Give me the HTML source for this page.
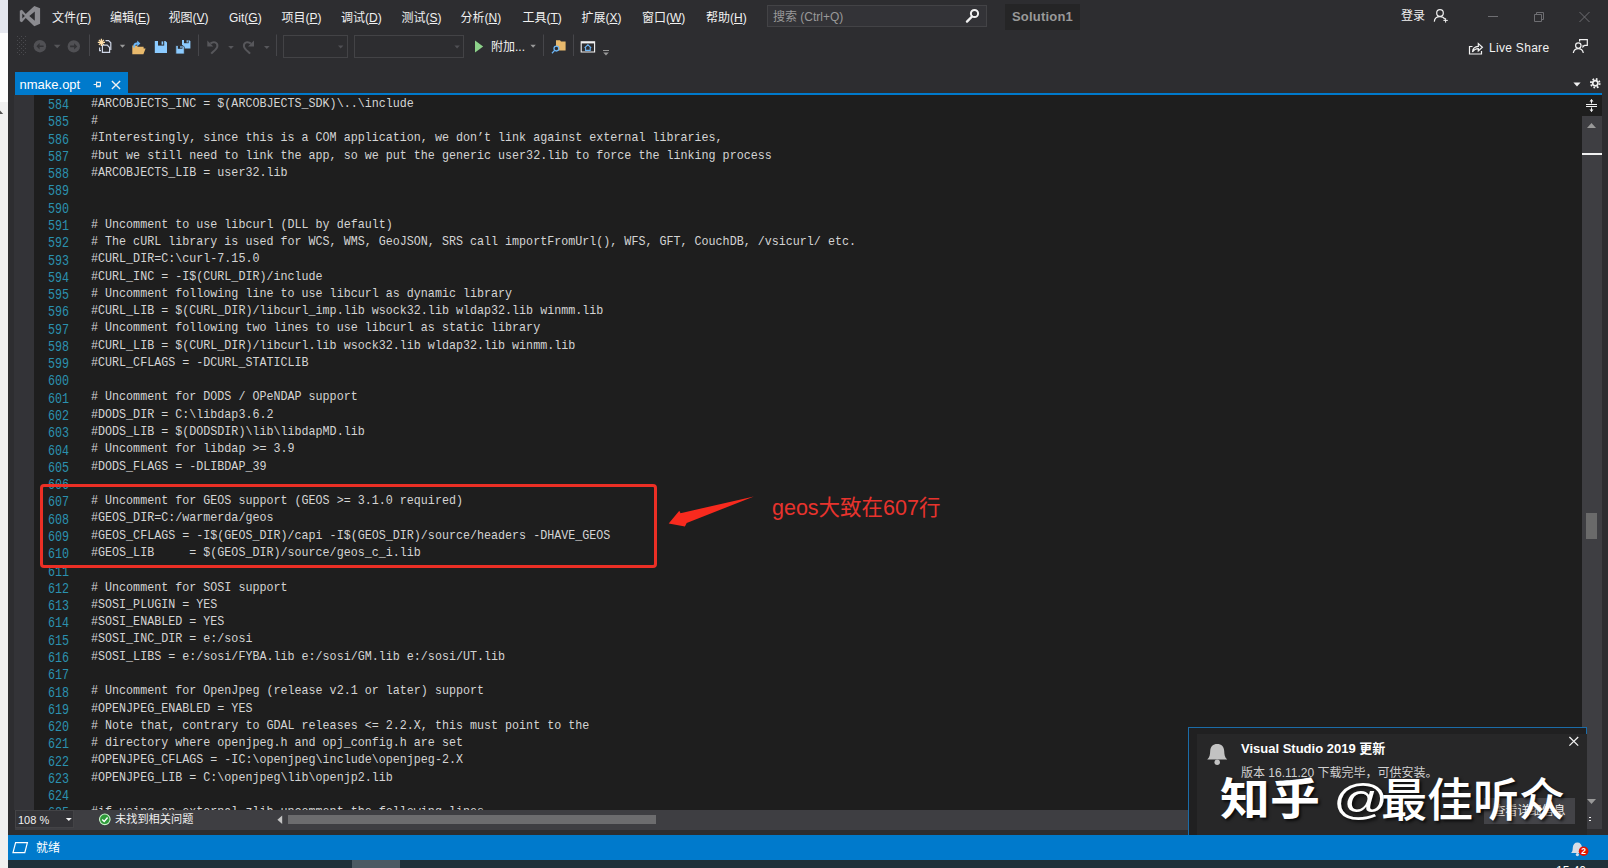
<!DOCTYPE html>
<html lang="zh-CN">
<head>
<meta charset="utf-8">
<title>nmake.opt - Visual Studio</title>
<style>
*{box-sizing:border-box;margin:0;padding:0}
html,body{width:1608px;height:868px;overflow:hidden;background:#2d2d30}
body{position:relative;font-family:"Liberation Sans","Noto Sans CJK SC",sans-serif;font-size:12px;color:#f1f1f1}
.abs{position:absolute}
/* left foreign-window strip */
#ls1{left:0;top:0;width:8px;height:33px;background:#e5e7ef}
#ls2{left:0;top:33px;width:8px;height:69px;background:#fdfdfd}
#ls3{left:0;top:102px;width:8px;height:766px;background:#f0f0f0}
/* menu */
.menu{position:absolute;top:9.5px;height:17px;line-height:17px;font-size:12px;color:#f1f1f1;white-space:nowrap}
.menu u{text-decoration:underline;text-underline-offset:1px}
/* editor */
#editor{left:14px;top:95px;width:1568px;height:715px;background:#1e1e1e;overflow:hidden}
#margin{left:0;top:0;width:20px;height:715px;background:#333337}
#code{left:0;top:0;width:1567px;height:715px;font-family:"Liberation Mono","Noto Sans CJK SC",monospace;font-size:14px}
.ln{position:absolute;left:0;height:18px;line-height:18px;white-space:pre}
.no{position:absolute;left:34px;top:0.5px;color:#2b91af;transform-origin:0 50%;transform:scaleX(0.8357)}
.tx{position:absolute;left:76.7px;top:-0.8px;font-size:13.6px;color:#d4d4d4;transform-origin:0 50%;transform:scaleX(0.8603)}

#search{left:767px;top:5px;width:220px;height:22px;background:#333337;border:1px solid #434346;color:#999;font-size:12px;line-height:20px}
#search span{position:absolute;left:5px;top:1px}
#sol{left:1005px;top:4px;width:75px;height:26px;background:#252526;color:#999;font-weight:bold;font-size:13px;letter-spacing:.2px;line-height:26px;text-align:center}
#liveshare{left:1489px;top:40px;height:17px;line-height:17px;font-size:12px;letter-spacing:.3px;color:#f1f1f1;white-space:nowrap}
.combo{top:35px;height:23px;background:#2d2d30;border:1px solid #434346}
#attach{left:491px;top:39px;height:17px;line-height:17px;font-size:12px;color:#f1f1f1;white-space:nowrap}
#tab{left:15px;top:72px;width:113px;height:21px;background:#007acc;color:#fff;font-size:13px;line-height:21px}
#tab span{position:absolute;left:4.5px;top:1.5px}
#tabline{left:15px;top:93px;width:1587px;height:2px;background:#007acc}

#redbox{left:40px;top:484px;width:617px;height:84px;border:3px solid #ec2f25;border-radius:4px}
#caption{left:772px;top:493px;height:30px;line-height:30px;font-size:21.5px;color:#e8332d;white-space:nowrap}
#vscroll{left:1582px;top:95px;width:20px;height:734px;background:#3e3e42}
#vsplit{left:0;top:0;width:20px;height:21px;background:#1e1e1e}
#vmark{left:0;top:58px;width:20px;height:2px;background:#f1f1f1}
#vthumb{left:4px;top:418px;width:11px;height:26px;background:#6a6a6a}
#estrip{left:15px;top:810px;width:1567px;height:20px;background:#3e3e42}
#zoom{left:0;top:0;width:59px;height:18px;background:#333337;border:1px solid #434346;color:#f1f1f1;font-size:11px;line-height:16px}
#zoom span{position:absolute;left:2px;top:0.5px}
#noissue{left:100px;top:0;height:18px;line-height:18px;font-size:11.2px;color:#f1f1f1;white-space:nowrap}
#hthumb{left:273px;top:5.4px;width:368px;height:8.6px;background:#6c6c6e}
#status{left:8px;top:835px;width:1600px;height:25px;background:#007acc;color:#fff;font-size:12px;line-height:25px}
#status span{position:absolute;left:28px;top:1px}
#taskbar{left:8px;top:860px;width:1600px;height:8px;background:#1f303a;overflow:hidden}
#tbact{left:344px;top:0;width:48px;height:8px;background:#4b5a63}
#clock{left:1548px;top:4px;font-size:12px;line-height:14px;color:#fff}
#popup{left:1188px;top:727px;width:399px;height:108px;background:#202021;border:1px solid #1b6ca8;border-bottom:none}
#pin{left:8px;top:6px;width:390px;height:101px;background:#272728}
#ptitle{left:52px;top:11.5px;height:17px;line-height:17px;font-size:13px;font-weight:bold;color:#fff;white-space:nowrap}
#pbody{left:52px;top:37px;height:17px;line-height:17px;font-size:12px;color:#d0d0d0;white-space:nowrap}
#pbtn{left:295px;top:70px;width:91px;height:26px;background:#434347;color:#f1f1f1;font-size:12px;line-height:26px;text-align:center;white-space:nowrap}
#wm1,#wm2{height:70px;line-height:70px;color:#fff;white-space:nowrap;font-family:"Liberation Sans","Noto Sans CJK SC",sans-serif;text-shadow:2px 2px 3px rgba(0,0,0,.75)}
#wm1{left:1220px;top:764.6px;font-size:50px;font-weight:700;transform-origin:50% 50%;transform:scaleY(0.89)}
#wm2{left:1381px;top:765px;font-size:46px;font-weight:500}
#wm3{left:1333px;top:763.5px;font-size:43px;height:70px;line-height:70px;color:#fff;text-shadow:2px 2px 3px rgba(0,0,0,.75);transform-origin:0 50%;transform:scaleX(1.27)}
</style>
</head>
<body>
<div class="abs" id="ls1"></div><div class="abs" id="ls2"></div><div class="abs" id="ls3"></div>

<!-- ===== title / menu bar ===== -->
<div class="menu" style="left:52px">文件(<u>F</u>)</div>
<div class="menu" style="left:110px">编辑(<u>E</u>)</div>
<div class="menu" style="left:168.5px">视图(<u>V</u>)</div>
<div class="menu" style="left:229px">Git(<u>G</u>)</div>
<div class="menu" style="left:281.5px">项目(<u>P</u>)</div>
<div class="menu" style="left:341px">调试(<u>D</u>)</div>
<div class="menu" style="left:401.5px">测试(<u>S</u>)</div>
<div class="menu" style="left:460.5px">分析(<u>N</u>)</div>
<div class="menu" style="left:522.5px">工具(<u>T</u>)</div>
<div class="menu" style="left:581.5px">扩展(<u>X</u>)</div>
<div class="menu" style="left:642px">窗口(<u>W</u>)</div>
<div class="menu" style="left:706px">帮助(<u>H</u>)</div>

<div class="abs" id="search"><span>搜索 (Ctrl+Q)</span></div>
<div class="abs" id="sol">Solution1</div>
<div class="menu" style="left:1401px;top:8.3px">登录</div>
<div class="abs" id="liveshare">Live Share</div>

<!-- toolbar combos -->
<div class="abs combo" style="left:283px;width:65px"></div>
<div class="abs combo" style="left:354px;width:110px"></div>
<div class="abs" id="attach">附加...</div>

<!-- document tab -->
<div class="abs" id="tab"><span>nmake.opt</span></div>
<div class="abs" id="tabline"></div>

<svg class="abs" style="left:0;top:0" width="1608" height="100" viewBox="0 0 1608 100">
 <!-- VS logo -->
 <path fill="#8b8b90" fill-rule="evenodd" d="M34.3 5.9 L40.1 8.3 V23.8 L34.3 26.2 L25.7 18 L21.9 22.3 L19.8 21.3 V10.8 L21.9 9.8 L25.7 14.1 Z M34.8 11.4 V20.7 L29.3 16.05 Z M22.3 13.5 L24.9 16.05 L22.3 18.6 Z"/>
 <!-- search magnifier -->
 <g fill="none" stroke="#f1f1f1" stroke-width="2"><circle cx="974.5" cy="13.5" r="3.6"/><path d="M972 16.5 L967 21.6" stroke-width="2.4" stroke-linecap="round"/></g>
 <!-- user icon -->
 <g fill="none" stroke="#f1f1f1" stroke-width="1.2"><circle cx="1440" cy="13" r="3.3"/><path d="M1434.3 21.6 C1434.6 17.8 1437 16.6 1440 16.6 C1442.4 16.6 1444 17.6 1444.9 19.3"/><path d="M1445.6 18.2 V22.6 M1443.4 20.4 H1447.8" stroke-width="1"/></g>
 <!-- window buttons -->
 <g fill="none" stroke="#6e6e72" stroke-width="1"><path d="M1488 16.5 H1498"/><path d="M1534.5 14.5 H1541.5 V21.5 H1534.5 Z M1536.5 14.5 V12.5 H1543.5 V19.5 H1541.5"/><path d="M1579.5 12 L1589.5 22 M1589.5 12 L1579.5 22"/></g>
 <!-- live share icon -->
 <g fill="none" stroke="#f1f1f1" stroke-width="1.2"><path d="M1472.5 46.5 H1469.5 V54 H1481.5 V51"/><path d="M1472.5 52 C1472.8 48 1475 46.4 1478.3 46.3 V43.6 L1482.4 47.3 L1478.3 51 V48.6 C1475.6 48.6 1474 49.6 1472.5 52 Z"/></g>
 <!-- feedback icon -->
 <g fill="none" stroke="#f1f1f1" stroke-width="1.2"><circle cx="1578.3" cy="45.6" r="2.7"/><path d="M1573.3 53 C1573.8 49.9 1575.8 48.7 1578.3 48.7 C1580.8 48.7 1582.8 49.9 1583.3 53"/><path d="M1579.6 41.6 V39.6 H1587.3 V45.3 H1584.6 L1583 46.8 V45.3"/></g>
 <!-- tab-well dropdown + gear -->
 <path fill="#f1f1f1" d="M1573.4 82.6 H1580.6 L1577 86.4 Z"/>
 <g fill="none" stroke="#f1f1f1"><circle cx="1595.3" cy="83.3" r="2.6" stroke-width="1.7"/><circle cx="1595.3" cy="83.3" r="4.4" stroke-width="1.8" stroke-dasharray="1.73 1.73"/></g>

 <!-- toolbar grip -->
 <g fill="#4a4a4e">
  <rect x="17" y="36" width="1" height="1"/><rect x="21" y="36" width="1" height="1"/><rect x="25" y="36" width="1" height="1"/>
  <rect x="19" y="38" width="1" height="1"/><rect x="23" y="38" width="1" height="1"/>
  <rect x="17" y="40" width="1" height="1"/><rect x="21" y="40" width="1" height="1"/><rect x="25" y="40" width="1" height="1"/>
  <rect x="19" y="42" width="1" height="1"/><rect x="23" y="42" width="1" height="1"/>
  <rect x="17" y="44" width="1" height="1"/><rect x="21" y="44" width="1" height="1"/><rect x="25" y="44" width="1" height="1"/>
  <rect x="19" y="46" width="1" height="1"/><rect x="23" y="46" width="1" height="1"/>
  <rect x="17" y="48" width="1" height="1"/><rect x="21" y="48" width="1" height="1"/><rect x="25" y="48" width="1" height="1"/>
  <rect x="19" y="50" width="1" height="1"/><rect x="23" y="50" width="1" height="1"/>
  <rect x="17" y="52" width="1" height="1"/><rect x="21" y="52" width="1" height="1"/><rect x="25" y="52" width="1" height="1"/>
  <rect x="19" y="54" width="1" height="1"/><rect x="23" y="54" width="1" height="1"/>
 </g>
 <!-- back / forward -->
 <circle cx="39.9" cy="46.2" r="6.2" fill="#505054"/>
 <path d="M36.4 46.2 L39.6 43 V45.4 H43.6 V47 H39.6 V49.4 Z" fill="#333336"/>
 <path d="M53.8 44.8 H60.6 L57.2 48.2 Z" fill="#555558"/>
 <circle cx="73.8" cy="46.4" r="6.2" fill="#505054"/>
 <path d="M77.3 46.4 L74.1 43.2 V45.6 H70.1 V47.2 H74.1 V49.6 Z" fill="#333336"/>
 <!-- separators -->
 <g stroke="#46464a" stroke-width="1"><path d="M89.5 34.5 V56"/><path d="M198.5 34.5 V56"/><path d="M276.5 34.5 V56"/><path d="M543.5 34.5 V56"/><path d="M573.5 34.5 V56"/></g>
 <!-- new item -->
 <g fill="none" stroke="#cfd6e6" stroke-width="1.2"><path d="M105.5 40.6 H108.6 L110.8 42.8 V50"/><path d="M102.4 45.2 H107.2 L109.6 47.6 V52.4 H102.4 Z"/><path d="M99.6 47.6 V50.6 H101"/></g>
 <g stroke="#ffdfa8" stroke-width="1.3"><path d="M101.4 38.8 V46 M97.8 42.4 H105 M98.9 39.9 L103.9 44.9 M103.9 39.9 L98.9 44.9"/></g>
 <path d="M119.8 44.8 H125.2 L122.5 47.8 Z" fill="#999"/>
 <!-- open -->
 <path d="M132.3 54.2 V45.6 H136.6 L137.8 46.8 H143.6 V48.4 H145.6 L143.4 54.2 Z" fill="#e8b96c"/>
 <path d="M133.2 47.4 C133.2 43.6 134.8 42.6 137.2 42.6 V40.4 L140.4 43.4 L137.2 46.4 V44.4 C135.6 44.4 134.9 45 134.9 47.4 Z" fill="#6cb5f5"/>
 <!-- save -->
 <path d="M154.8 40.9 H165.4 L167 42.5 V53 H154.8 Z" fill="#8ccbff"/>
 <path d="M158 40.9 H164.2 V45.6 H158 Z" fill="#2d2d30"/><rect x="161.6" y="41.4" width="1.6" height="3.2" fill="#8ccbff"/>
 <!-- save all -->
 <path d="M182 40 H189 L190.4 41.4 V48.4 H182 Z" fill="#8ccbff"/><path d="M184 40 H188.6 V43.2 H184 Z" fill="#2d2d30"/><rect x="186.6" y="40.3" width="1.2" height="2.2" fill="#8ccbff"/>
 <path d="M175.8 45.5 H182.8 L184.3 47 V54 H175.8 Z" fill="#8ccbff" stroke="#2d2d30" stroke-width="0.8"/><path d="M177.8 45.6 H182.4 V48.8 H177.8 Z" fill="#2d2d30"/><rect x="180.4" y="46" width="1.2" height="2.2" fill="#8ccbff"/>
 <!-- undo / redo -->
 <g fill="none" stroke="#57575b" stroke-width="2"><path d="M210.4 43.6 C213.4 41 217.6 42.2 217.4 46 C217.2 49 214 50.8 211.2 53.6"/><path d="M250.9 43.6 C247.9 41 243.7 42.2 243.9 46 C244.1 49 247.3 50.8 250.1 53.6"/></g>
 <path d="M207.3 40.4 V46.4 H213.3 Z" fill="#57575b"/><path d="M254 40.4 V46.4 H248 Z" fill="#57575b"/>
 <path d="M228.2 46 H233.8 L231 49 Z" fill="#57575b"/>
 <path d="M264 46 H269.6 L266.8 49 Z" fill="#57575b"/>
 <!-- combo arrows -->
 <path d="M338 45.6 H343.4 L340.7 48.4 Z" fill="#505054"/><path d="M454.4 45.6 H459.8 L457.1 48.4 Z" fill="#505054"/>
 <!-- start -->
 <path d="M475 40.6 L483.2 46.5 L475 52.4 Z" fill="#8dd28a"/>
 <path d="M530.4 44.8 H535.8 L533.1 47.8 Z" fill="#999"/>
 <!-- find in files -->
 <path d="M556 40.2 H560 L561 41.4 H565.6 V50.6 H556 Z" fill="#e8b96c"/>
 <g fill="none" stroke="#6cb5f5" stroke-width="1.3"><circle cx="556.4" cy="48.6" r="2.4" fill="#2d2d30"/><path d="M554.6 50.4 L552 53.2"/></g>
 <!-- window/home -->
 <path d="M581.2 41.7 H594.6 V52 H581.2 Z" fill="none" stroke="#f1f1f1" stroke-width="1.1"/><path d="M581.2 42.6 H594.6" stroke="#f1f1f1" stroke-width="1.6"/>
 <path d="M584.6 47.8 L587.9 44.8 L591.2 47.8 M585.6 47.4 V50.4 H590.2 V47.4" fill="none" stroke="#6cb5f5" stroke-width="1.1"/>
 <!-- overflow -->
 <path d="M603 50.5 H609" stroke="#999" stroke-width="1"/><path d="M603.2 52.6 H608.8 L606 55.4 Z" fill="#999"/>
 <!-- tab pin + close -->
 <g fill="none" stroke="#f1f1f1" stroke-width="1.1"><path d="M93.6 84.5 H96.6 M96.6 81.4 V87.6 M96.6 82.4 H100.4 V86 H96.6 M96.6 86.6 H100.4"/></g>
 <path d="M111.9 81 L120.1 88.9 M120.1 81 L111.9 88.9" stroke="#f1f1f1" stroke-width="1.4" fill="none"/>
</svg>


<div class="abs" id="editor">
<div class="abs" id="margin"></div>
<div class="abs" id="code">
<div class="ln" style="top:0.50px"><span class="no">584</span><span class="tx">#ARCOBJECTS_INC = $(ARCOBJECTS_SDK)\..\include</span></div>
<div class="ln" style="top:17.78px"><span class="no">585</span><span class="tx">#</span></div>
<div class="ln" style="top:35.06px"><span class="no">586</span><span class="tx">#Interestingly, since this is a COM application, we don’t link against external libraries,</span></div>
<div class="ln" style="top:52.34px"><span class="no">587</span><span class="tx">#but we still need to link the app, so we put the generic user32.lib to force the linking process</span></div>
<div class="ln" style="top:69.62px"><span class="no">588</span><span class="tx">#ARCOBJECTS_LIB = user32.lib</span></div>
<div class="ln" style="top:86.90px"><span class="no">589</span><span class="tx"></span></div>
<div class="ln" style="top:104.18px"><span class="no">590</span><span class="tx"></span></div>
<div class="ln" style="top:121.46px"><span class="no">591</span><span class="tx"># Uncomment to use libcurl (DLL by default)</span></div>
<div class="ln" style="top:138.74px"><span class="no">592</span><span class="tx"># The cURL library is used for WCS, WMS, GeoJSON, SRS call importFromUrl(), WFS, GFT, CouchDB, /vsicurl/ etc.</span></div>
<div class="ln" style="top:156.02px"><span class="no">593</span><span class="tx">#CURL_DIR=C:\curl-7.15.0</span></div>
<div class="ln" style="top:173.30px"><span class="no">594</span><span class="tx">#CURL_INC = -I$(CURL_DIR)/include</span></div>
<div class="ln" style="top:190.58px"><span class="no">595</span><span class="tx"># Uncomment following line to use libcurl as dynamic library</span></div>
<div class="ln" style="top:207.86px"><span class="no">596</span><span class="tx">#CURL_LIB = $(CURL_DIR)/libcurl_imp.lib wsock32.lib wldap32.lib winmm.lib</span></div>
<div class="ln" style="top:225.14px"><span class="no">597</span><span class="tx"># Uncomment following two lines to use libcurl as static library</span></div>
<div class="ln" style="top:242.42px"><span class="no">598</span><span class="tx">#CURL_LIB = $(CURL_DIR)/libcurl.lib wsock32.lib wldap32.lib winmm.lib</span></div>
<div class="ln" style="top:259.70px"><span class="no">599</span><span class="tx">#CURL_CFLAGS = -DCURL_STATICLIB</span></div>
<div class="ln" style="top:276.98px"><span class="no">600</span><span class="tx"></span></div>
<div class="ln" style="top:294.26px"><span class="no">601</span><span class="tx"># Uncomment for DODS / OPeNDAP support</span></div>
<div class="ln" style="top:311.54px"><span class="no">602</span><span class="tx">#DODS_DIR = C:\libdap3.6.2</span></div>
<div class="ln" style="top:328.82px"><span class="no">603</span><span class="tx">#DODS_LIB = $(DODSDIR)\lib\libdapMD.lib</span></div>
<div class="ln" style="top:346.10px"><span class="no">604</span><span class="tx"># Uncomment for libdap &gt;= 3.9</span></div>
<div class="ln" style="top:363.38px"><span class="no">605</span><span class="tx">#DODS_FLAGS = -DLIBDAP_39</span></div>
<div class="ln" style="top:380.66px"><span class="no">606</span><span class="tx"></span></div>
<div class="ln" style="top:397.94px"><span class="no">607</span><span class="tx"># Uncomment for GEOS support (GEOS &gt;= 3.1.0 required)</span></div>
<div class="ln" style="top:415.22px"><span class="no">608</span><span class="tx">#GEOS_DIR=C:/warmerda/geos</span></div>
<div class="ln" style="top:432.50px"><span class="no">609</span><span class="tx">#GEOS_CFLAGS = -I$(GEOS_DIR)/capi -I$(GEOS_DIR)/source/headers -DHAVE_GEOS</span></div>
<div class="ln" style="top:449.78px"><span class="no">610</span><span class="tx">#GEOS_LIB     = $(GEOS_DIR)/source/geos_c_i.lib</span></div>
<div class="ln" style="top:467.06px"><span class="no">611</span><span class="tx"></span></div>
<div class="ln" style="top:484.34px"><span class="no">612</span><span class="tx"># Uncomment for SOSI support</span></div>
<div class="ln" style="top:501.62px"><span class="no">613</span><span class="tx">#SOSI_PLUGIN = YES</span></div>
<div class="ln" style="top:518.90px"><span class="no">614</span><span class="tx">#SOSI_ENABLED = YES</span></div>
<div class="ln" style="top:536.18px"><span class="no">615</span><span class="tx">#SOSI_INC_DIR = e:/sosi</span></div>
<div class="ln" style="top:553.46px"><span class="no">616</span><span class="tx">#SOSI_LIBS = e:/sosi/FYBA.lib e:/sosi/GM.lib e:/sosi/UT.lib</span></div>
<div class="ln" style="top:570.74px"><span class="no">617</span><span class="tx"></span></div>
<div class="ln" style="top:588.02px"><span class="no">618</span><span class="tx"># Uncomment for OpenJpeg (release v2.1 or later) support</span></div>
<div class="ln" style="top:605.30px"><span class="no">619</span><span class="tx">#OPENJPEG_ENABLED = YES</span></div>
<div class="ln" style="top:622.58px"><span class="no">620</span><span class="tx"># Note that, contrary to GDAL releases &lt;= 2.2.X, this must point to the</span></div>
<div class="ln" style="top:639.86px"><span class="no">621</span><span class="tx"># directory where openjpeg.h and opj_config.h are set</span></div>
<div class="ln" style="top:657.14px"><span class="no">622</span><span class="tx">#OPENJPEG_CFLAGS = -IC:\openjpeg\include\openjpeg-2.X</span></div>
<div class="ln" style="top:674.42px"><span class="no">623</span><span class="tx">#OPENJPEG_LIB = C:\openjpeg\lib\openjp2.lib</span></div>
<div class="ln" style="top:691.70px"><span class="no">624</span><span class="tx"></span></div>
<div class="ln" style="top:708.98px"><span class="no">625</span><span class="tx">#if using an external zlib uncomment the following lines</span></div>
</div>
</div>

<!-- ===== annotation overlay (red box / arrow / caption) ===== -->
<div class="abs" id="redbox"></div>
<svg class="abs" style="left:660px;top:488px" width="100" height="44" viewBox="660 488 100 44"><path fill="#f82a1e" d="M668.7 523.4 L679.3 510.7 L680.5 513.2 L753.9 496.4 L686.7 523.1 L684.9 526.6 Z"/></svg>
<div class="abs" id="caption">geos大致在607行</div>

<svg class="abs" style="left:0;top:105px" width="8" height="12" viewBox="0 105 8 12"><path d="M0 110.4 L3.2 113.9 H0 Z" fill="#505050"/></svg>
<!-- ===== vertical scrollbar ===== -->
<div class="abs" id="vscroll">
 <div class="abs" id="vsplit"></div>
 <div class="abs" id="vmark"></div>
 <div class="abs" id="vthumb"></div>
</div>
<svg class="abs" style="left:1582px;top:95px" width="20" height="735" viewBox="1582 95 20 735">
 <g stroke="#f1f1f1" stroke-width="1" fill="none"><path d="M1586 104.5 H1597 M1586 106.5 H1597"/><path d="M1591.5 99.5 V103.5 M1591.5 107.5 V111.5"/></g>
 <path d="M1589.5 101.5 L1591.5 99 L1593.5 101.5 Z M1589.5 109.5 L1591.5 112 L1593.5 109.5 Z" fill="#f1f1f1"/>
 <path d="M1587 128 L1591.5 123 L1596 128 Z" fill="#999"/>
 <path d="M1587 799 L1591.5 804 L1596 799 Z" fill="#999"/>
 <g fill="#f1f1f1"><rect x="1589" y="817" width="2" height="1"/><rect x="1589" y="820" width="2" height="1"/></g>
</svg>

<!-- ===== editor bottom strip ===== -->
<div class="abs" id="estrip">
 <div class="abs" id="zoom"><span>108 %</span></div>
 <div class="abs" id="noissue">未找到相关问题</div>
 <div class="abs" id="hthumb"></div>
</div>
<svg class="abs" style="left:60px;top:810px" width="230" height="19" viewBox="60 810 230 19">
 <path d="M65.8 818 H71.8 L68.8 821 Z" fill="#f1f1f1"/>
 <circle cx="104.8" cy="819.3" r="5.3" fill="#2f9a3a" stroke="#c9f2c9" stroke-width="1.1"/>
 <path d="M102.2 819.5 L104.2 821.5 L107.6 817.5" fill="none" stroke="#fff" stroke-width="1.4"/>
 <path d="M282.2 815.6 L277.4 819.8 L282.2 824 Z" fill="#c4c4c4"/>
</svg>

<!-- ===== status bar ===== -->
<div class="abs" id="status"><span>就绪</span></div>
<svg class="abs" style="left:8px;top:835px" width="1594" height="25" viewBox="8 835 1594 25">
 <path d="M15.6 842.6 H27.4 L24.8 852.6 H13 Z" fill="none" stroke="#fff" stroke-width="1.2"/>
 <path d="M1571 853 C1572.6 851.6 1572.6 850 1572.8 847.4 C1573 844.4 1574.6 842.4 1577.4 842.4 C1580.2 842.4 1581.8 844.4 1582 847.4 C1582.2 850 1582.2 851.6 1583.8 853 Z" fill="#d6dde6"/><circle cx="1577.4" cy="854.6" r="1.6" fill="#d6dde6"/>
 <circle cx="1583.6" cy="851.2" r="4.8" fill="#e51400"/>
 <text x="1583.6" y="854.4" font-family="Liberation Sans, sans-serif" font-size="8.5" font-weight="bold" fill="#fff" text-anchor="middle">2</text>
</svg>

<!-- ===== taskbar sliver ===== -->
<div class="abs" id="taskbar"><div class="abs" id="tbact"></div><div class="abs" id="clock">15:40</div></div>

<!-- ===== notification popup ===== -->
<div class="abs" id="popup">
 <div class="abs" id="pin"></div>
 <div class="abs" id="ptitle">Visual Studio 2019 更新</div>
 <div class="abs" id="pbody">版本 16.11.20 下载完毕，可供安装。</div>
 <div class="abs" id="pbtn">查看详细信息</div>
</div>
<svg class="abs" style="left:1200px;top:730px" width="390" height="40" viewBox="1200 730 390 40">
 <path d="M1207.2 759.6 C1209.8 757.4 1210 754.6 1210.2 751 C1210.5 746.6 1213 744 1217.2 744 C1221.4 744 1223.9 746.6 1224.2 751 C1224.4 754.6 1224.6 757.4 1227.2 759.6 Z" fill="#c2c2c2"/><circle cx="1217.2" cy="762.2" r="2.7" fill="#c2c2c2"/>
 <path d="M1569.4 737 L1578.2 745.6 M1578.2 737 L1569.4 745.6" stroke="#f1f1f1" stroke-width="1.3" fill="none"/>
</svg>

<!-- ===== watermark ===== -->
<div class="abs" id="wm1">知乎</div><div class="abs" id="wm3">@</div><div class="abs" id="wm2">最佳听众</div>


</body>
</html>
